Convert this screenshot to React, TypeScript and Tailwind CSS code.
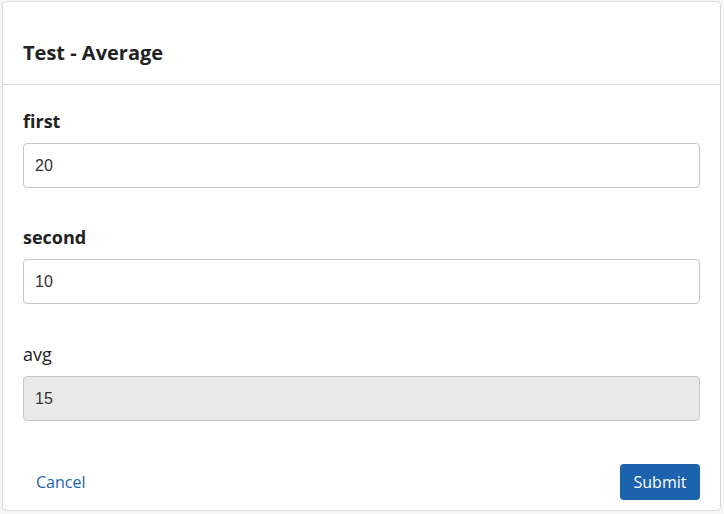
import React from 'react';

const fields = [
  { name: 'first', label: 'first', value: '20', bold: true, readOnly: false, gap: 'mb-[37px]' },
  { name: 'second', label: 'second', value: '10', bold: true, readOnly: false, gap: 'mb-[38px]' },
  { name: 'avg', label: 'avg', value: '15', bold: false, readOnly: true, gap: '' },
];

export default function App() {
  return (
    <div className="h-[514px] w-[724px] bg-[#f6f6f6] pl-[2px] pr-[3px] pt-[1px] pb-[3px] font-['Open_Sans',sans-serif]">
      <div className="flex h-full flex-col rounded-[4px] border border-[#d9d9d9] bg-white">
        <div className="h-[83px] border-b border-[#dcdcdc] px-5 pt-[39px]">
          <h1 className="text-[20px] font-bold leading-[24px] text-[#222]">Test - Average</h1>
        </div>

        <div className="px-5 pt-[24px]">
          {fields.map((f) => (
            <div key={f.name} className={f.gap}>
              <label
                htmlFor={f.name}
                className={`mb-[10px] block text-[18px] leading-[24px] text-[#222] ${f.bold ? 'font-bold' : 'font-normal'}`}
              >
                {f.label}
              </label>
              <input
                id={f.name}
                defaultValue={f.value}
                readOnly={f.readOnly}
                className={`block h-[45px] w-full rounded-[4px] border border-[#c6c6c6] px-[11px] font-['Liberation_Sans',Arial,sans-serif] text-[16px] text-[#333] outline-none ${f.readOnly ? 'bg-[#e9e9e9]' : 'bg-white'}`}
              />
            </div>
          ))}
        </div>

        <div className="mt-[43px] flex items-center justify-between px-5">
          <button className="h-[36px] rounded-[4px] px-[13px] text-[16px] text-[#1a63ae]">Cancel</button>
          <button className="h-[36px] w-[80px] rounded-[4px] bg-[#1c62ad] text-[16px] text-white">Submit</button>
        </div>
      </div>
    </div>
  );
}
